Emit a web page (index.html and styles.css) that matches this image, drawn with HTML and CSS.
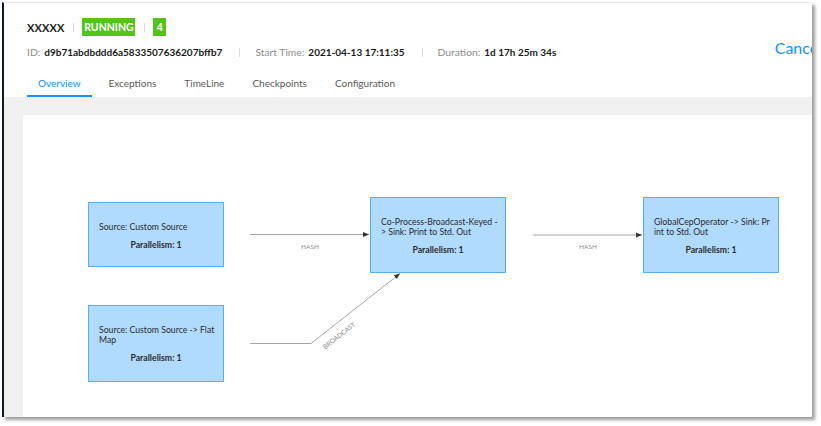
FILE: index.html
```html
<!DOCTYPE html>
<html lang="en">
<head>
<meta charset="utf-8">
<title>Job Overview</title>
<link rel="stylesheet" href="styles.css">
</head>
<body>
<div class="window">
  <header class="job-header">
    <div class="header-main">
      <div class="job-info">
        <div class="title-row">
          <span class="job-name">XXXXX</span>
          <span class="sep"></span>
          <span class="badge badge-running">RUNNING</span>
          <span class="sep"></span>
          <span class="badge badge-count">4</span>
        </div>
        <div class="meta-row">
          <span class="meta-label">ID:</span>
          <span class="meta-value">d9b71abdbddd6a5833507636207bffb7</span>
          <span class="sep"></span>
          <span class="meta-label">Start Time:</span>
          <span class="meta-value">2021-04-13 17:11:35</span>
          <span class="sep"></span>
          <span class="meta-label">Duration:</span>
          <span class="meta-value">1d 17h 25m 34s</span>
        </div>
      </div>
      <a class="cancel">Cancel</a>
    </div>
    <nav class="tabs">
      <span class="tab active">Overview</span>
      <span class="tab">Exceptions</span>
      <span class="tab">TimeLine</span>
      <span class="tab">Checkpoints</span>
      <span class="tab">Configuration</span>
    </nav>
  </header>
  <main class="content">
    <section class="canvas">
      <svg class="edges" width="800" height="310" viewBox="0 0 800 310">
        <defs>
          <marker id="arrow" markerWidth="6" markerHeight="6" refX="6" refY="3" orient="auto" markerUnits="userSpaceOnUse">
            <path d="M0,0.6 L6,3 L0,5.4 Z" fill="#333"/>
          </marker>
        </defs>
        <path class="edge" d="M227,119.5 H346" marker-end="url(#arrow)"/>
        <text class="edge-label" x="287" y="133.5" text-anchor="middle">HASH</text>
        <path class="edge" d="M510,120 H619" marker-end="url(#arrow)"/>
        <text class="edge-label" x="565" y="133.5" text-anchor="middle">HASH</text>
        <path class="edge" d="M227,228.5 H288 L377,158.5" marker-end="url(#arrow)"/>
        <text class="edge-label" x="316" y="223" text-anchor="middle" transform="rotate(-38 316 220.5)">BROADCAST</text>
      </svg>
      <div class="node node-a">
        <div class="node-name">Source: Custom Source</div>
        <div class="node-par">Parallelism: 1</div>
      </div>
      <div class="node node-b">
        <div class="node-name">Source: Custom Source -&gt; Flat<br>Map</div>
        <div class="node-par">Parallelism: 1</div>
      </div>
      <div class="node node-c">
        <div class="node-name">Co-Process-Broadcast-Keyed -<br>&gt; Sink: Print to Std. Out</div>
        <div class="node-par">Parallelism: 1</div>
      </div>
      <div class="node node-d">
        <div class="node-name">GlobalCepOperator -&gt; Sink: Pr<br>int to Std. Out</div>
        <div class="node-par">Parallelism: 1</div>
      </div>
    </section>
  </main>
</div>
</body>
</html>
```
FILE: styles.css
```css
* { box-sizing: border-box; }
html, body { margin: 0; padding: 0; background: #fff; }
body {
  font-family: Lato, "Noto Sans", Arial, sans-serif;
  color: #262626;
  width: 821px;
  height: 426px;
  overflow: hidden;
}
.window {
  margin: 2px 0 0 2px;
  width: 810px;
  height: 415px;
  border-left: 2px solid #0f1a2e;
  border-top: 1px solid #e6e6e6;
  background: #f0f0f0;
  box-shadow: 3px 3px 3px rgba(0,0,0,0.38);
  overflow: hidden;
  display: flex;
  flex-direction: column;
}
.job-header {
  background: #fff;
  padding: 15px 0 0 23px;
  width: 860px;
  flex: none;
}
.header-main {
  display: flex;
  align-items: flex-start;
}
.job-info { display: flex; flex-direction: column; }
.title-row {
  display: flex;
  align-items: center;
  height: 18px;
}
.job-name {
  font-size: 11px;
  font-weight: 700;
  color: #222;
  letter-spacing: 0.1px;
}
.sep {
  display: inline-block;
  width: 1px;
  height: 9px;
  background: #dcdcdc;
  margin: 0 9px;
}
.title-row .sep { margin: 0 8px 0 9px; }
.badge {
  display: inline-flex;
  align-items: center;
  justify-content: center;
  height: 18px;
  background: #52c41a;
  color: #fff;
  font-weight: 700;
  font-size: 10.5px;
}
.badge-running { width: 53px; }
.badge-count { width: 13px; }
.meta-row {
  display: flex;
  align-items: center;
  margin-top: 8px;
  height: 16px;
  font-size: 10px;
}
.meta-label { color: #8c8c8c; margin-right: 4px; font-size: 10.3px; }
.meta-value { font-weight: 700; color: #1a1a1a; }
.meta-row .sep { margin: 0 15px 0 17px; }
.cancel {
  margin-left: auto;
  margin-right: 42px;
  margin-top: 20px;
  font-size: 16px;
  color: #1890ff;
  line-height: 20px;
}
.tabs {
  display: flex;
  gap: 6px;
  margin-top: 10px;
}
.tab {
  font-size: 10px;
  line-height: 14px;
  color: #595959;
  padding: 6px 11px 5px;
  border-bottom: 2px solid transparent;
}
.tab.active {
  color: #1890ff;
  border-bottom-color: #1890ff;
}
.content {
  flex: 1;
  padding: 18px 0 0 19px;
}
.canvas {
  position: relative;
  background: #fff;
  height: 100%;
}
.edges {
  position: absolute;
  left: 0;
  top: 0;
}
.edge {
  fill: none;
  stroke: #a6a6a6;
  stroke-width: 1;
}
.edge-label {
  font-family: Lato, "Noto Sans", Arial, sans-serif;
  font-size: 6.5px;
  fill: #8c8c8c;
}
.node {
  position: absolute;
  width: 136px;
  background: #b1daff;
  border: 1px solid #5cacf5;
  padding: 19px 10px 0;
  font-size: 8.7px;
  color: #2b2b2b;
}
.node-name {
  line-height: 10px;
  white-space: nowrap;
}
.node-par {
  margin-top: 8px;
  text-align: center;
  font-weight: 700;
  line-height: 10px;
}
.node-a { left: 65px; top: 87px; height: 65px; }
.node-b { left: 65px; top: 190px; height: 77px; }
.node-c { left: 347px; top: 82px; height: 76px; }
.node-d { left: 620px; top: 82px; height: 76px; }
```
